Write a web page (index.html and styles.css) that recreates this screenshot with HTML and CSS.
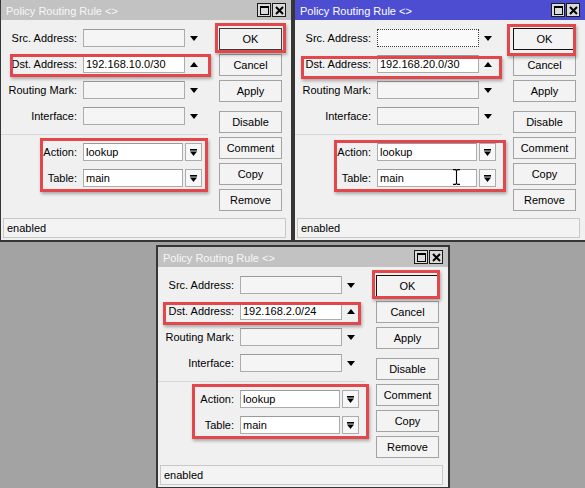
FILE: index.html
```html
<!DOCTYPE html>
<html>
<head>
<meta charset="utf-8">
<title>Policy Routing Rule</title>
<link rel="stylesheet" href="styles.css">
</head>
<body>
<div class="desktop">

  <!-- Window 1 -->
  <div class="win w1">
    <div class="titlebar">
      <span class="title">Policy Routing Rule &lt;&gt;</span>
      <div class="tbtns">
        <span class="tb"><svg width="9" height="9" viewBox="0 0 9 9"><rect x="0.5" y="0.5" width="8" height="8" fill="none" stroke="#000"/><rect x="0" y="0" width="9" height="2" fill="#000"/></svg></span>
        <span class="tb"><svg width="9" height="9" viewBox="0 0 9 9"><path d="M1 1 L8 8 M8 1 L1 8" stroke="#000" stroke-width="2"/></svg></span>
      </div>
    </div>
    <div class="wbody">
      <div class="main">
        <div class="form">
          <div class="row"><span class="lbl">Src. Address:</span><span class="field empty"></span><span class="tri down"></span></div>
          <div class="row"><span class="lbl">Dst. Address:</span><span class="field">192.168.10.0/30</span><span class="tri up"></span></div>
          <div class="row"><span class="lbl">Routing Mark:</span><span class="field empty"></span><span class="tri down"></span></div>
          <div class="row"><span class="lbl">Interface:</span><span class="field empty"></span><span class="tri down"></span></div>
          <div class="sep"></div>
          <div class="row"><span class="lbl">Action:</span><span class="field combo">lookup</span><span class="ddbtn"><svg width="7" height="7" viewBox="0 0 7 7"><rect x="0" y="0" width="7" height="1.6" fill="#000"/><path d="M0 2.6 H7 L3.5 7 Z" fill="#000"/></svg></span></div>
          <div class="row"><span class="lbl">Table:</span><span class="field combo">main</span><span class="ddbtn"><svg width="7" height="7" viewBox="0 0 7 7"><rect x="0" y="0" width="7" height="1.6" fill="#000"/><path d="M0 2.6 H7 L3.5 7 Z" fill="#000"/></svg></span></div>
        </div>
        <div class="buttons">
          <span class="btn ok">OK</span>
          <span class="btn">Cancel</span>
          <span class="btn">Apply</span>
          <span class="btn gap">Disable</span>
          <span class="btn">Comment</span>
          <span class="btn">Copy</span>
          <span class="btn">Remove</span>
        </div>
      </div>
      <div class="status">enabled</div>
    </div>
    <div class="hl hl-dst"></div>
    <div class="hl hl-ok"></div>
    <div class="hl hl-act"></div>
  </div>

  <!-- Window 2 (active) -->
  <div class="win w2 active">
    <div class="titlebar">
      <span class="title">Policy Routing Rule &lt;&gt;</span>
      <div class="tbtns">
        <span class="tb"><svg width="9" height="9" viewBox="0 0 9 9"><rect x="0.5" y="0.5" width="8" height="8" fill="none" stroke="#000"/><rect x="0" y="0" width="9" height="2" fill="#000"/></svg></span>
        <span class="tb"><svg width="9" height="9" viewBox="0 0 9 9"><path d="M1 1 L8 8 M8 1 L1 8" stroke="#000" stroke-width="2"/></svg></span>
      </div>
    </div>
    <div class="wbody">
      <div class="main">
        <div class="form">
          <div class="row"><span class="lbl">Src. Address:</span><span class="field empty focus"></span><span class="tri down"></span></div>
          <div class="row"><span class="lbl">Dst. Address:</span><span class="field">192.168.20.0/30</span><span class="tri up"></span></div>
          <div class="row"><span class="lbl">Routing Mark:</span><span class="field empty"></span><span class="tri down"></span></div>
          <div class="row"><span class="lbl">Interface:</span><span class="field empty"></span><span class="tri down"></span></div>
          <div class="sep"></div>
          <div class="row"><span class="lbl">Action:</span><span class="field combo">lookup</span><span class="ddbtn"><svg width="7" height="7" viewBox="0 0 7 7"><rect x="0" y="0" width="7" height="1.6" fill="#000"/><path d="M0 2.6 H7 L3.5 7 Z" fill="#000"/></svg></span></div>
          <div class="row"><span class="lbl">Table:</span><span class="field combo">main</span><span class="ddbtn"><svg width="7" height="7" viewBox="0 0 7 7"><rect x="0" y="0" width="7" height="1.6" fill="#000"/><path d="M0 2.6 H7 L3.5 7 Z" fill="#000"/></svg></span></div>
        </div>
        <div class="buttons">
          <span class="btn ok">OK</span>
          <span class="btn">Cancel</span>
          <span class="btn">Apply</span>
          <span class="btn gap">Disable</span>
          <span class="btn">Comment</span>
          <span class="btn">Copy</span>
          <span class="btn">Remove</span>
        </div>
      </div>
      <div class="status">enabled</div>
    </div>
    <div class="hl hl-dst"></div>
    <div class="hl hl-ok"></div>
    <div class="hl hl-act"></div>
    <svg class="ibeam" width="7" height="16" viewBox="0 0 7 16"><path d="M0 0.6 H2.5 L3.5 1.6 L4.5 0.6 H7 M3.5 1.6 V14.4 M0 15.4 H2.5 L3.5 14.4 L4.5 15.4 H7" fill="none" stroke="#000" stroke-width="1.1"/></svg>
  </div>

  <!-- Window 3 -->
  <div class="win w3">
    <div class="titlebar">
      <span class="title">Policy Routing Rule &lt;&gt;</span>
      <div class="tbtns">
        <span class="tb"><svg width="9" height="9" viewBox="0 0 9 9"><rect x="0.5" y="0.5" width="8" height="8" fill="none" stroke="#000"/><rect x="0" y="0" width="9" height="2" fill="#000"/></svg></span>
        <span class="tb"><svg width="9" height="9" viewBox="0 0 9 9"><path d="M1 1 L8 8 M8 1 L1 8" stroke="#000" stroke-width="2"/></svg></span>
      </div>
    </div>
    <div class="wbody">
      <div class="main">
        <div class="form">
          <div class="row"><span class="lbl">Src. Address:</span><span class="field empty"></span><span class="tri down"></span></div>
          <div class="row"><span class="lbl">Dst. Address:</span><span class="field">192.168.2.0/24</span><span class="tri up"></span></div>
          <div class="row"><span class="lbl">Routing Mark:</span><span class="field empty"></span><span class="tri down"></span></div>
          <div class="row"><span class="lbl">Interface:</span><span class="field empty"></span><span class="tri down"></span></div>
          <div class="sep"></div>
          <div class="row"><span class="lbl">Action:</span><span class="field combo">lookup</span><span class="ddbtn"><svg width="7" height="7" viewBox="0 0 7 7"><rect x="0" y="0" width="7" height="1.6" fill="#000"/><path d="M0 2.6 H7 L3.5 7 Z" fill="#000"/></svg></span></div>
          <div class="row"><span class="lbl">Table:</span><span class="field combo">main</span><span class="ddbtn"><svg width="7" height="7" viewBox="0 0 7 7"><rect x="0" y="0" width="7" height="1.6" fill="#000"/><path d="M0 2.6 H7 L3.5 7 Z" fill="#000"/></svg></span></div>
        </div>
        <div class="buttons">
          <span class="btn ok">OK</span>
          <span class="btn">Cancel</span>
          <span class="btn">Apply</span>
          <span class="btn gap">Disable</span>
          <span class="btn">Comment</span>
          <span class="btn">Copy</span>
          <span class="btn">Remove</span>
        </div>
      </div>
      <div class="status">enabled</div>
    </div>
    <div class="hl hl-dst"></div>
    <div class="hl hl-ok"></div>
    <div class="hl hl-act"></div>
  </div>

</div>
</body>
</html>
```

FILE: styles.css
```css
html, body {
  margin: 0;
  padding: 0;
}
body {
  width: 585px;
  height: 488px;
  overflow: hidden;
  background: #a3a3a3;
}
.desktop {
  position: relative;
  width: 585px;
  height: 488px;
  overflow: hidden;
  background: #a3a3a3;
  font-family: "Liberation Sans", Arial, sans-serif;
  font-size: 11px;
  color: #000;
}

/* Windows on the desktop */
.win {
  position: absolute;
  width: 294px;
  height: 244px;
  box-sizing: border-box;
  border: 2px solid #363636;
  background: #f0f0f0;
  display: flex;
  flex-direction: column;
}
.w1 { left: -1px; top: -2px; }
.w2 { left: 293px; top: -2px; }
.w3 { left: 156px; top: 245px; }

.titlebar {
  height: 20px;
  flex: none;
  background: #c2c2c2;
  display: flex;
  align-items: center;
  justify-content: space-between;
  padding: 0 5px 0 5px;
}
.active .titlebar { background: #4d4dd1; }
.title {
  color: #f7f7f7;
  font-size: 11px;
  padding-top: 1px;
}
.active .title { color: #ffffff; }
.tbtns {
  display: flex;
  gap: 1px;
}
.tb {
  width: 14px;
  height: 14px;
  box-sizing: border-box;
  border: 1px solid #1a1a1a;
  background: #dadada;
  display: flex;
  align-items: center;
  justify-content: center;
}

.wbody {
  flex: 1;
  display: flex;
  flex-direction: column;
}
.main {
  flex: 1;
  display: flex;
  gap: 20px;
}
.form {
  width: 198px;
  flex: none;
  padding-top: 9px;
  display: flex;
  flex-direction: column;
  gap: 8px;
}
.row {
  display: flex;
  align-items: center;
  height: 18px;
}
.lbl {
  width: 76px;
  flex: none;
  text-align: right;
  margin-right: 6px;
  white-space: nowrap;
}
.field {
  width: 102px;
  height: 18px;
  flex: none;
  box-sizing: border-box;
  border: 1px solid #acacac;
  border-top-color: #9a9a9a;
  background: #ffffff;
  padding-left: 2px;
  line-height: 16px;
  white-space: nowrap;
}
.field.empty { background: #f5f5f5; }
.field.focus { border: 1px dotted #3a3a3a; background: #fafafa; }
.field.combo { width: 100px; }
.tri {
  width: 0;
  height: 0;
  flex: none;
  margin-left: 5px;
  border-left: 4.5px solid transparent;
  border-right: 4.5px solid transparent;
}
.tri.down { border-top: 5px solid #000; }
.tri.up { border-bottom: 5px solid #000; }
.ddbtn {
  width: 17px;
  height: 18px;
  flex: none;
  box-sizing: border-box;
  margin-left: 2px;
  border: 1px solid #acacac;
  background: #f7f7f7;
  display: flex;
  align-items: center;
  justify-content: center;
}
.sep {
  width: 207px;
  flex: none;
  height: 0;
  border-top: 1px solid #d6d6d6;
  margin: 1px 0 0 0;
}

.buttons {
  padding-top: 8px;
  display: flex;
  flex-direction: column;
  gap: 4px;
}
.btn {
  width: 63px;
  height: 22px;
  box-sizing: border-box;
  border: 1px solid #a3a3a3;
  background: #f3f3f3;
  text-align: center;
  line-height: 20px;
}
.btn.gap { margin-top: 5px; }
.btn.ok { border-color: #3c3c3c; }
.active .btn.ok, .w3 .btn.ok { border-color: #111; }

.status {
  height: 20px;
  flex: none;
  box-sizing: border-box;
  margin: 0 5px 2px 2px;
  border: 1px solid #c8c8c8;
  background: #f3f3f3;
  padding-left: 3px;
  line-height: 18px;
}

/* red highlight overlays */
.hl {
  position: absolute;
  box-sizing: border-box;
  border: 3px solid #e2474b;
  box-shadow: 1px 2px 3px rgba(0, 0, 0, 0.3);
}
.w1 .hl-dst { left: 9px; top: 54px; width: 201px; height: 23px; }
.w1 .hl-ok  { left: 214px; top: 23px; width: 71px; height: 30px; }
.w1 .hl-act { left: 39px; top: 138px; width: 168px; height: 54px; }
.w2 .hl-dst { left: 6px; top: 56px; width: 201px; height: 23px; }
.w2 .hl-ok  { left: 212px; top: 24px; width: 69px; height: 32px; }
.w2 .hl-act { left: 39px; top: 140px; width: 172px; height: 52px; }
.w3 .hl-dst { left: 5px; top: 55px; width: 198px; height: 23px; }
.w3 .hl-ok  { left: 214px; top: 23px; width: 68px; height: 29px; }
.w3 .hl-act { left: 34px; top: 137px; width: 177px; height: 55px; }

.ibeam {
  position: absolute;
  left: 158px;
  top: 169px;
}
```
